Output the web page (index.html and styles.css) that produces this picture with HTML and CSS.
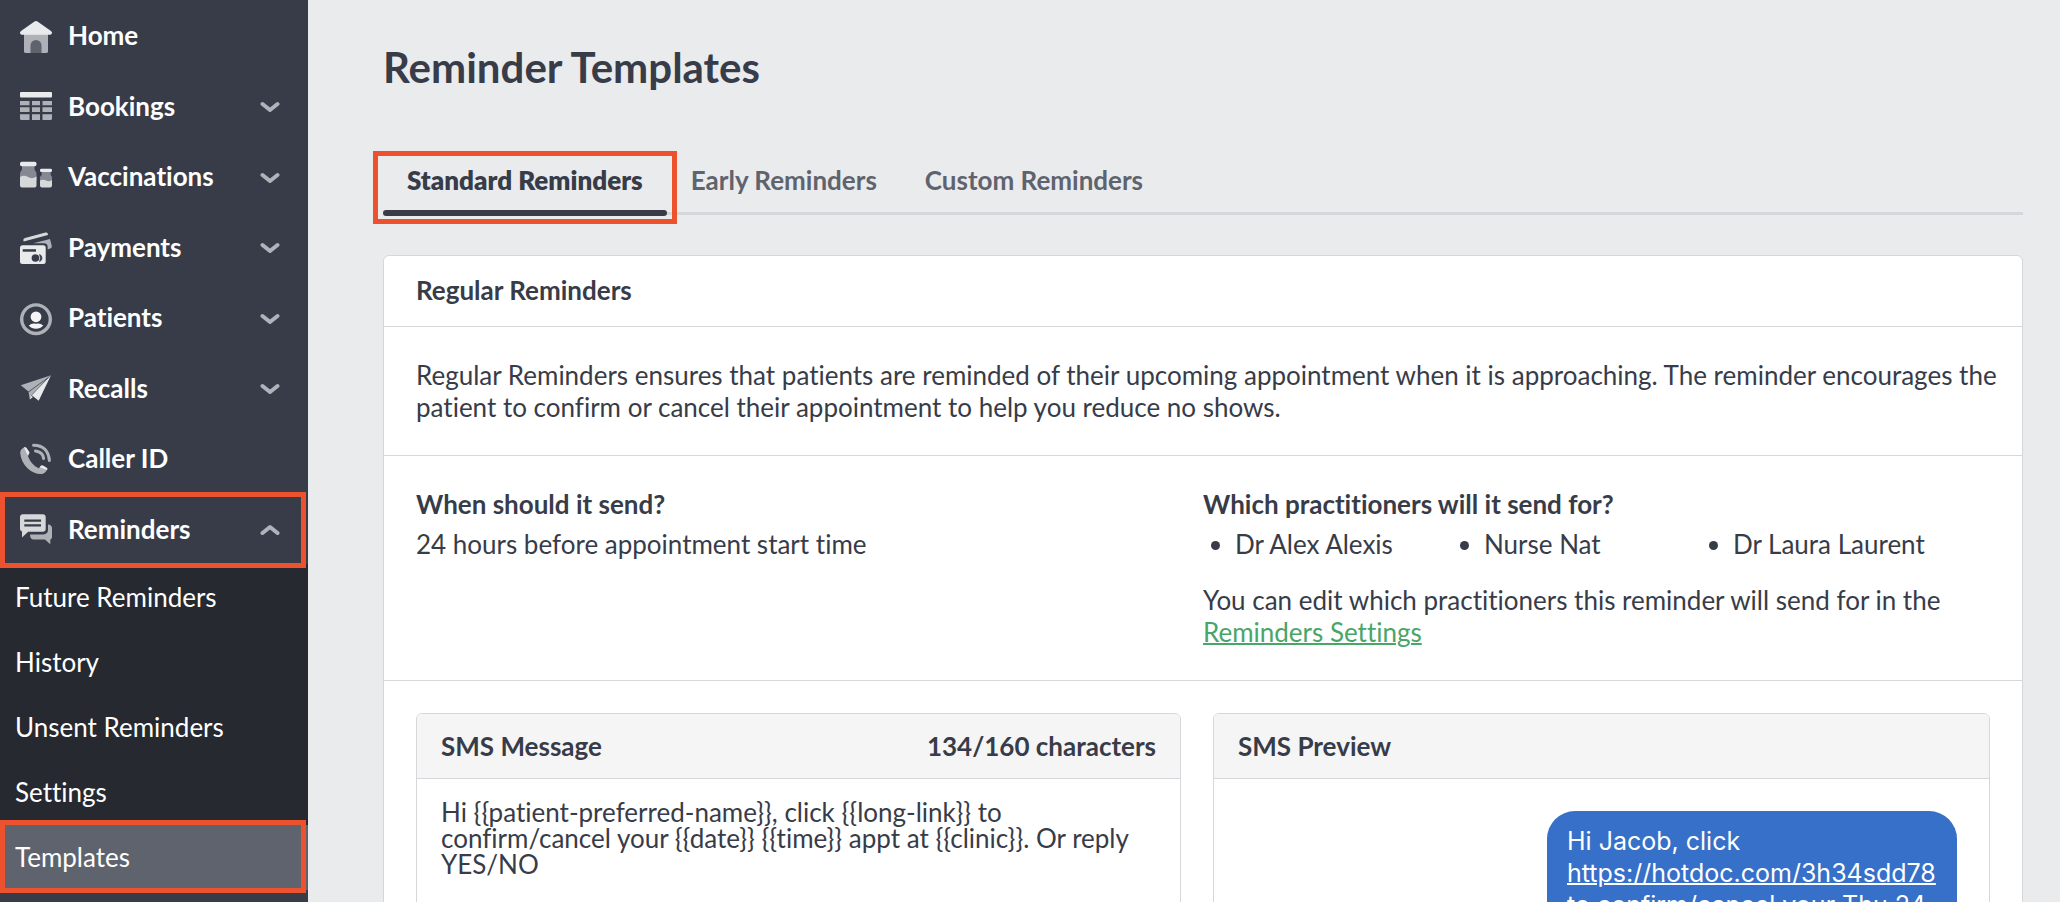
FILE: index.html
```html
<!DOCTYPE html>
<html lang="en">
<head>
<meta charset="utf-8">
<meta name="viewport" content="width=device-width, initial-scale=1">
<title>Reminder Templates</title>
<link rel="stylesheet" href="styles.css">
</head>
<body>
<svg width="0" height="0" class="defs" aria-hidden="true">
  <symbol id="chevron" viewBox="0 0 20 12"><path d="M2.5 3 L10 9 L17.5 3" fill="none" stroke="#b0b3ba" stroke-width="4" stroke-linecap="round" stroke-linejoin="round"/></symbol>
</svg>
<div class="app">
  <aside class="sidebar">
    <nav aria-label="Main">
      <div class="menu">
        <a class="menu-item" href="#">
          <svg class="icon" viewBox="0 0 32 36" aria-hidden="true"><path d="M4 17h24v17.600q0 1.400-1.400 1.400h-21.200q-1.400 0-1.400-1.400z" fill="#afb1b8"/><path d="M10.500 36v-7.500a5.500 5.500 0 0 1 11 0v7.500z" fill="#5f636e"/><path d="M14.500 4.600q1.500-1 3 0L31 14q1.800 1.500.6 3-.4.700-1.600.7H2q-1.200 0-1.600-.7-1.200-1.500.6-3z" fill="#e9eaec"/></svg>
          <span>Home</span>
        </a>
        <button class="menu-item" type="button">
          <svg class="icon" viewBox="0 0 32 36" aria-hidden="true"><rect y="4" width="32" height="5.500" rx="1" fill="#e9eceb"/><path d="M0 13h9.500v4.200H0zM12 13h8v4.200h-8zM22.500 13H32v4.200h-9.500zM0 19.300h9.500V24H0zM12 19.300h8V24h-8zM22.500 19.300H32V24h-9.500zM0 26.300h9.500V32H1.500Q0 32 0 30.500zM12 26.300h8V32h-8zM22.500 26.300H32v4.200q0 1.500-1.500 1.500h-8z" fill="#afb1b8"/></svg>
          <span>Bookings</span><svg class="chevron" aria-hidden="true"><use href="#chevron"/></svg>
        </button>
        <button class="menu-item" type="button">
          <svg class="icon" viewBox="0 0 32 36" aria-hidden="true"><path d="M2 7h12.500v4q0 1 .8 1.800 1.200 1.400 1.200 3V22H0v-6q0-1.800 1.200-3.200Q2 12 2 11zM21.700 13h9v4q1.300 1 1.300 2.500V25H20v-5.500q0-1.500 1.700-2.500z" fill="#868993"/><path d="M0 19q4-2.500 8 0t8.500-.5V27.500q0 2-2 2H2q-2 0-2-2zM20 22.500q3-1.700 6 0t6-.5V27.500q0 2-2 2h-8q-2 0-2-2z" fill="#d7d8da"/><rect y="3.800" width="16.500" height="4.400" rx="1.800" fill="#e9eaec"/><rect x="20" y="10.800" width="12" height="3.300" rx="1.400" fill="#e9eaec"/></svg>
          <span>Vaccinations</span><svg class="chevron" aria-hidden="true"><use href="#chevron"/></svg>
        </button>
        <button class="menu-item" type="button">
          <svg class="icon" viewBox="0 0 32 36" aria-hidden="true"><path d="M3.300 11q0-1.700 1.700-2.100L25.500 3.500q1.700-.4 2.200 1l.3 1.500L3.700 12.400z" fill="#d7d8da"/><path d="M13.300 14.200L30 9.900l1.800 7q.2 1.600-1.200 2.300l-2.900 1.200V18q0-3.600-3.700-3.700z" fill="#afb1b8"/><rect y="16.200" width="25.700" height="18.700" rx="2.500" fill="#e9eaec"/><rect x="2.700" y="20.200" width="13.300" height="2.500" fill="#373c48"/><circle cx="15.400" cy="29" r="3.800" fill="#373c48"/><path d="M19.600 25.600a3.700 3.700 0 0 1 0 6.900q1.700-3.400 0-6.900z" fill="#373c48" stroke="#373c48" stroke-width=".8"/></svg>
          <span>Payments</span><svg class="chevron" aria-hidden="true"><use href="#chevron"/></svg>
        </button>
        <button class="menu-item" type="button">
          <svg class="icon" viewBox="0 0 32 36" aria-hidden="true"><circle cx="16" cy="20.200" r="14.300" fill="none" stroke="#afb1b8" stroke-width="3.400"/><circle cx="16" cy="17.800" r="5.400" fill="#f4f4f5"/><path d="M8.800 26.400Q12 23.800 16 24.800q4-1 7.200 1.600-2.800 3.300-7.200 3.300t-7.200-3.300z" fill="#f4f4f5"/></svg>
          <span>Patients</span><svg class="chevron" aria-hidden="true"><use href="#chevron"/></svg>
        </button>
        <button class="menu-item" type="button">
          <svg class="icon" viewBox="0 0 32 36" aria-hidden="true"><path d="M.7 15.200L31 5.200 8.500 21.500z" fill="#afb1b8"/><path d="M8.600 22.200L27 8.800 12 24.500 9.800 29.500z" fill="#afb1b8"/><path d="M31 5.200L11.800 25.300l6.900 5.400zM9.800 29.500l1-3.700 2.200 1.300z" fill="#e9eaec"/></svg>
          <span>Recalls</span><svg class="chevron" aria-hidden="true"><use href="#chevron"/></svg>
        </button>
        <a class="menu-item" href="#">
          <svg class="icon" viewBox="0 0 32 36" aria-hidden="true"><path d="M4.200 7.300Q0 9.500.2 13q.8 9 7.300 15.200t14.700 5.700q3.800-.6 5-4.800L20.500 27l-2 1.300Q11 24.500 8 16.200l1.200-2.700z" fill="#afb1b8"/><path d="M4 7.300q1.200-.8 2.400.5l2.800 4q.8 1.300-.3 2.300l-1.500 1zM19.500 27.200l1.300-1.500q1-.9 2.200-.1l3.800 2.200q1.200 1 .4 2.200z" fill="#e9eaec"/><path d="M13.600 5.200Q28 5.400 29.400 20.500" fill="none" stroke="#afb1b8" stroke-width="3" stroke-linecap="round"/><path d="M15.500 11Q23 12 23.600 18.500" fill="none" stroke="#afb1b8" stroke-width="3" stroke-linecap="round"/></svg>
          <span>Caller ID</span>
        </a>
        <button class="menu-item highlight-host" type="button" aria-expanded="true">
          <svg class="icon" viewBox="0 0 32 36" aria-hidden="true"><path d="M10 23.400h13.500q4.500-.4 4.500-5v-5q4 .3 4 4V26q0 2.200-1.700 2.600v4.600L25 28.600H13.500q-3.300-.2-3.500-5.200z" fill="#afb1b8"/><path d="M3 3.200h19.700q3 0 3 3v11.500q0 3-3 3H8.200L2 26.500v-6Q0 20 0 17.700V6.200q0-3 3-3z" fill="#d7d8da"/><path d="M4.300 8.500H21v2.300H4.300zM4.300 13.200H21v2.300H4.300z" fill="#373c48"/></svg>
          <span>Reminders</span><svg class="chevron chevron-up" aria-hidden="true"><use href="#chevron"/></svg>
        </button>
      </div>
      <div class="submenu">
        <a href="#">Future Reminders</a>
        <a href="#">History</a>
        <a href="#">Unsent Reminders</a>
        <a href="#">Settings</a>
        <a class="current highlight-host" href="#" aria-current="page">Templates</a>
      </div>
    </nav>
  </aside>
  <main class="main">
    <h1>Reminder Templates</h1>
    <div class="tabs" role="tablist">
      <button class="tab active" type="button" role="tab" aria-selected="true">Standard Reminders</button>
      <button class="tab" type="button" role="tab" aria-selected="false">Early Reminders</button>
      <button class="tab" type="button" role="tab" aria-selected="false">Custom Reminders</button>
    </div>
    <section class="card">
      <h2 class="card-title">Regular Reminders</h2>
      <p class="card-row intro">Regular Reminders ensures that patients are reminded of their upcoming appointment when it is approaching. The reminder encourages the patient to confirm or cancel their appointment to help you reduce no shows.</p>
      <div class="card-row details">
        <div>
          <h3>When should it send?</h3>
          <p>24 hours before appointment start time</p>
        </div>
        <div>
          <h3>Which practitioners will it send for?</h3>
          <ul class="practitioners">
            <li>Dr Alex Alexis</li>
            <li>Nurse Nat</li>
            <li>Dr Laura Laurent</li>
          </ul>
          <p>You can edit which practitioners this reminder will send for in the <a class="link" href="#">Reminders Settings</a></p>
        </div>
      </div>
      <div class="card-row messages">
        <div class="panel">
          <div class="panel-head"><label for="sms">SMS Message</label><span>134/160 characters</span></div>
          <textarea id="sms" rows="6">Hi {{patient-preferred-name}}, click {{long-link}} to confirm/cancel your {{date}} {{time}} appt at {{clinic}}. Or reply YES/NO</textarea>
        </div>
        <div class="panel">
          <div class="panel-head"><h3>SMS Preview</h3></div>
          <div class="preview">
            <p class="bubble">Hi Jacob, click <a href="#">https://hotdoc.com/3h34sdd78</a> to confirm/cancel your Thu 24</p>
          </div>
        </div>
      </div>
    </section>
  </main>
</div>
</body>
</html>
```
FILE: styles.css
```css
* { box-sizing: border-box; }

:root {
  --ink: #373c48;
  --line: #d5d7da;
  --mark: #ec522d;
}

body {
  margin: 0;
  background: #e9ebed;
  color: var(--ink);
  font: 400 26px/32px Lato, "Liberation Sans", sans-serif;
  font-variant-ligatures: no-common-ligatures;
}

h1, h2, h3, p, ul { margin: 0; padding: 0; }
h2, h3 { font-size: 26px; font-weight: 700; }
button, textarea {
  margin: 0;
  border: 0;
  background: none;
  color: inherit;
  font: inherit;
  font-variant-ligatures: no-common-ligatures;
}

.defs { position: absolute; }

.app {
  display: flex;
  height: 100vh;
  overflow: hidden;
}

/* Sidebar */
.sidebar {
  flex: 0 0 308px;
  background: var(--ink);
  color: #fff;
}

.menu {
  display: grid;
  grid-auto-rows: 1fr;
  height: 564px;
}

.menu-item {
  display: flex;
  align-items: center;
  gap: 16px;
  width: 100%;
  padding: 0 28px 0 20px;
  color: #fff;
  font-weight: 700;
  text-align: left;
  text-decoration: none;
}

.icon { width: 32px; height: 36px; overflow: visible; }
.chevron { width: 20px; height: 12px; margin-left: auto; }
.menu-item .chevron { margin-top: 3px; }
.chevron-up { transform: rotate(180deg); }

.submenu {
  padding-top: 1px;
  background: linear-gradient(#262930, #262930) 0 0 / 100% calc(100% - 1px) no-repeat;
}

.submenu a {
  display: block;
  padding: 16px 15px 17px;
  color: #fff;
  text-decoration: none;
}

.submenu .current { background: #5f636e; }

/* Marker frames drawn over the highlighted items */
.highlight-host, .tab.active { position: relative; }

.highlight-host::after, .tab.active::before {
  content: "";
  position: absolute;
  inset: -5px 2px -3px 0;
  border: 5px solid var(--mark);
  pointer-events: none;
}

.menu .highlight-host::after { inset: -2px 2px -4px 0; }
.tab.active::before { inset: -6px -10px -8px; }

/* Main */
.main {
  flex: 1;
  min-width: 0;
  padding: 41px 37px 0 75px;
}

h1 {
  font-size: 42px;
  line-height: 52px;
  font-weight: 700;
}

.tabs {
  display: flex;
  height: 59px;
  margin-top: 64px;
  background: linear-gradient(var(--line), var(--line)) 0 55px / 100% 3px no-repeat;
}

.tab {
  padding: 0 24px 14px;
  color: #5f636e;
  font-weight: 700;
}

.tab.active { color: var(--ink); font-weight: 800; }

.tab.active::after {
  content: "";
  position: absolute;
  inset: auto 0 0;
  height: 6px;
  border-radius: 3px;
  background: var(--ink);
}

.card {
  margin-top: 39px;
  border: 1px solid var(--line);
  border-radius: 6px;
  background: #fff;
}

.card-title { padding: 18px 32px 20px; }

.card-row {
  padding: 32px;
  border-top: 1px solid var(--line);
}

.intro { padding-right: 16px; }

.details {
  display: grid;
  grid-template-columns: 1fr 1fr;
}

.details h3 { margin-bottom: 8px; }

.practitioners {
  display: grid;
  grid-template-columns: repeat(3, 1fr);
  margin-bottom: 24px;
  padding-right: 40px;
}

.practitioners li { margin-left: 32px; }

.link { color: #49a568; }
.link, .bubble a { text-decoration-thickness: 2px; }

.messages {
  display: grid;
  grid-template-columns: 765fr 777fr;
  gap: 32px;
}

.panel {
  border: 1px solid var(--line);
  border-radius: 6px;
  overflow: hidden;
}

.panel-head {
  display: flex;
  justify-content: space-between;
  padding: 16px 24px;
  border-bottom: 1px solid var(--line);
  background: #f5f5f5;
  font-weight: 700;
}

textarea {
  display: block;
  width: 100%;
  padding: 20px 24px;
  line-height: 26px;
  resize: none;
  outline: 0;
}

.preview {
  display: flex;
  justify-content: flex-end;
  padding: 32px;
}

.bubble {
  width: 410px;
  padding: 14px 12px 14px 20px;
  border-radius: 28px;
  background: #3670c8;
  color: #fff;
  font-family: Inter, "Liberation Sans", sans-serif;
  font-size: 25px;
}

.bubble a { color: #fff; }
```
